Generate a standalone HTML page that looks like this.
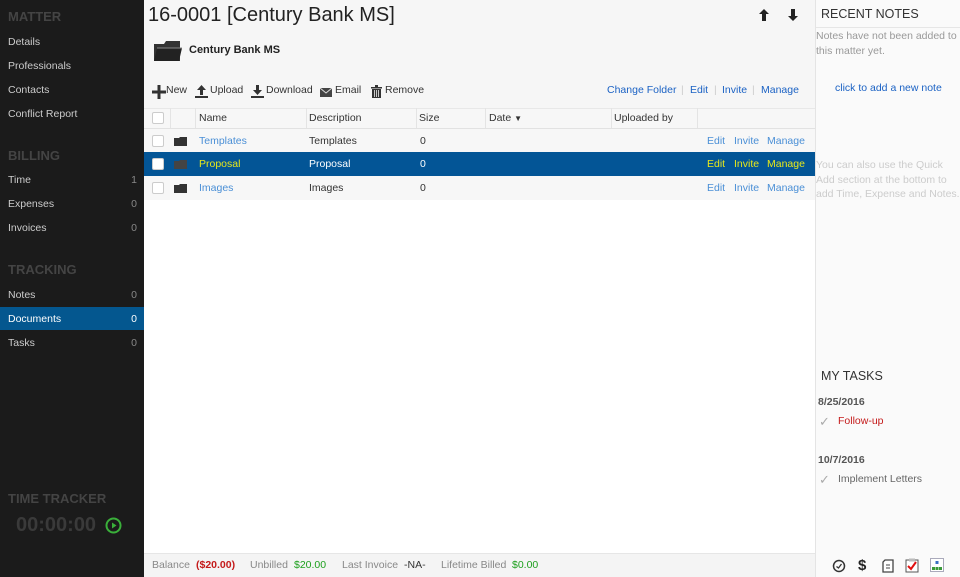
<!DOCTYPE html>
<html><head><meta charset="utf-8"><style>
*{margin:0;padding:0;box-sizing:border-box}
body{width:960px;height:577px;overflow:hidden;font-family:"Liberation Sans",sans-serif;font-size:10.5px;position:relative;background:#fff}
.a{position:absolute;white-space:nowrap}
#sb{position:absolute;left:0;top:0;width:144px;height:577px;background:#1b1b1b}
.h{color:#444;font-weight:bold;font-size:13px;left:8px}
.it{left:8px;color:#ccc;font-size:10.5px}
.ct{right:7px;color:#888;font-size:10.5px}
#main{position:absolute;left:144px;top:0;width:671px;height:577px;background:#fff}
#top{position:absolute;left:0;top:0;width:671px;height:108px;background:#f6f6f6}
.lnk{color:#1b62c4}
.row{position:absolute;left:0;width:671px;height:24px;background:#f7f7f7}
.cb{position:absolute;left:8px;top:6px;width:12px;height:12px;border:1px solid #ccc;border-radius:2px;background:#fff}
.c{position:absolute;top:6px;color:#333;white-space:nowrap}
.bl{color:#4a8fd6}
.t{color:#333;top:84px}
.f{top:559px}
#rp{position:absolute;left:815px;top:0;width:145px;height:577px;background:#fafafa;border-left:1px solid #e4e4e4}
</style></head><body>
<div id="sb">
<div class="a h" style="top:9px">MATTER</div>
<div class="a it" style="top:36px">Details</div>
<div class="a it" style="top:60px">Professionals</div>
<div class="a it" style="top:84px">Contacts</div>
<div class="a it" style="top:108px">Conflict Report</div>
<div class="a h" style="top:148px">BILLING</div>
<div class="a it" style="top:174px">Time</div><div class="a ct" style="top:174px">1</div>
<div class="a it" style="top:198px">Expenses</div><div class="a ct" style="top:198px">0</div>
<div class="a it" style="top:222px">Invoices</div><div class="a ct" style="top:222px">0</div>
<div class="a h" style="top:262px">TRACKING</div>
<div class="a it" style="top:289px">Notes</div><div class="a ct" style="top:289px">0</div>
<div class="a" style="left:0;top:307px;width:144px;height:23px;background:#04578f"></div>
<div class="a it" style="top:313px;color:#fff">Documents</div><div class="a ct" style="top:313px;color:#fff">0</div>
<div class="a it" style="top:337px">Tasks</div><div class="a ct" style="top:337px">0</div>
<div class="a h" style="top:491px">TIME TRACKER</div>
<div class="a" style="left:16px;top:514px;color:#3a3a3a;font-size:20px;font-weight:bold">00:00:00</div>
<svg class="a" style="left:105px;top:517px" width="17" height="17"><circle cx="8.5" cy="8.5" r="7" fill="none" stroke="#3ab03a" stroke-width="2"/><path d="M7 5.5L11.5 8.5L7 11.5Z" fill="#3ab03a"/></svg>
</div>
<div id="main">
<div id="top"></div>
<div class="a" style="left:4px;top:4px;font-size:20px;color:#222">16-0001 [Century Bank MS]</div>
<svg class="a" style="left:615px;top:9px" width="10" height="12"><path d="M5 0L10 5H7v7H3V5H0z" fill="#222"/></svg>
<svg class="a" style="left:644px;top:9px" width="10" height="12"><path d="M5 12L10 7H7V0H3v7H0z" fill="#222"/></svg>
<svg class="a" style="left:10px;top:40px" width="28" height="22"><path d="M0 4h10l2-3h14v20H0z" fill="#333"/><path d="M3 8h25l-3 13H0z" fill="#222"/><path d="M3 8h25" stroke="#888" stroke-width="1"/></svg>
<div class="a" style="left:45px;top:44px;font-weight:bold;color:#222;font-size:11px">Century Bank MS</div>
<svg class="a" style="left:8px;top:85px" width="14" height="14"><path d="M5.5 0h3v5.5H14v3H8.5V14h-3V8.5H0v-3h5.5z" fill="#333"/></svg>
<div class="a t" style="left:22px">New</div>
<svg class="a" style="left:51px;top:85px" width="13" height="13"><path d="M6.5 0L11 5H8v5H5V5H2z M0 11h13v2H0z" fill="#333"/></svg>
<div class="a t" style="left:66px">Upload</div>
<svg class="a" style="left:107px;top:85px" width="13" height="13"><path d="M6.5 10L11 5H8V0H5v5H2z M0 11h13v2H0z" fill="#333"/></svg>
<div class="a t" style="left:122px">Download</div>
<svg class="a" style="left:176px;top:88px" width="12" height="9"><rect width="12" height="9" fill="#444"/><path d="M0 0l6 5l6-5" stroke="#ddd" fill="none"/></svg>
<div class="a t" style="left:191px">Email</div>
<svg class="a" style="left:227px;top:85px" width="11" height="13"><path d="M0 2h11v1.5H0zM4 0h3v2H4zM1 4h9v9H1z" fill="#333"/><path d="M3.5 5v7M5.5 5v7M7.5 5v7" stroke="#eee" stroke-width=".8"/></svg>
<div class="a t" style="left:241px">Remove</div>
<div class="a lnk" style="left:463px;top:84px">Change Folder</div>
<div class="a" style="left:537px;top:84px;color:#ccc">|</div>
<div class="a lnk" style="left:546px;top:84px">Edit</div>
<div class="a" style="left:570px;top:84px;color:#ccc">|</div>
<div class="a lnk" style="left:578px;top:84px">Invite</div>
<div class="a" style="left:608px;top:84px;color:#ccc">|</div>
<div class="a lnk" style="left:617px;top:84px">Manage</div>
<div class="row" style="top:108px;height:21px;background:#f7f7f7;border-top:1px solid #e8e8e8;border-bottom:1px solid #e2e2e2"></div>
<div class="cb" style="top:112px"></div>
<div class="a" style="left:26px;top:108px;height:20px;border-left:1px solid #e4e4e4"></div>
<div class="a" style="left:51px;top:108px;height:20px;border-left:1px solid #e4e4e4"></div>
<div class="a" style="left:162px;top:108px;height:20px;border-left:1px solid #e4e4e4"></div>
<div class="a" style="left:272px;top:108px;height:20px;border-left:1px solid #e4e4e4"></div>
<div class="a" style="left:341px;top:108px;height:20px;border-left:1px solid #e4e4e4"></div>
<div class="a" style="left:467px;top:108px;height:20px;border-left:1px solid #e4e4e4"></div>
<div class="a" style="left:553px;top:108px;height:20px;border-left:1px solid #e4e4e4"></div>
<div class="c" style="left:55px;top:112px">Name</div>
<div class="c" style="left:165px;top:112px">Description</div>
<div class="c" style="left:275px;top:112px">Size</div>
<div class="c" style="left:345px;top:112px">Date <span style="font-size:8px">▼</span></div>
<div class="c" style="left:470px;top:112px">Uploaded by</div>

<div class="row" style="top:129px;height:23px"><div class="cb"></div><svg class="a" style="left:30px;top:8px" width="13" height="9"><path d="M0 1h5l1-1h7v9H0z" fill="#333"/></svg><div class="c bl" style="left:55px">Templates</div><div class="c" style="left:165px">Templates</div><div class="c" style="left:276px">0</div><div class="c bl" style="left:563px">Edit</div><div class="c bl" style="left:590px">Invite</div><div class="c bl" style="left:623px">Manage</div></div>
<div class="row" style="top:152px;height:24px;background:#035596"><div class="cb"></div><svg class="a" style="left:30px;top:8px" width="13" height="9"><path d="M0 1h5l1-1h7v9H0z" fill="#444"/></svg><div class="c" style="left:55px;color:#e8e81a">Proposal</div><div class="c" style="left:165px;color:#fff">Proposal</div><div class="c" style="left:276px;color:#fff">0</div><div class="c" style="left:563px;color:#e8e81a">Edit</div><div class="c" style="left:590px;color:#e8e81a">Invite</div><div class="c" style="left:623px;color:#e8e81a">Manage</div></div>
<div class="row" style="top:176px;height:24px"><div class="cb"></div><svg class="a" style="left:30px;top:8px" width="13" height="9"><path d="M0 1h5l1-1h7v9H0z" fill="#333"/></svg><div class="c bl" style="left:55px">Images</div><div class="c" style="left:165px">Images</div><div class="c" style="left:276px">0</div><div class="c bl" style="left:563px">Edit</div><div class="c bl" style="left:590px">Invite</div><div class="c bl" style="left:623px">Manage</div></div>

<div class="a" style="left:0;top:553px;width:671px;height:24px;background:#f4f4f4;border-top:1px solid #e6e6e6"></div>
<div class="a f" style="left:8px;color:#888">Balance</div>
<div class="a f" style="left:52px;color:#c41a1a;font-weight:bold">($20.00)</div>
<div class="a f" style="left:106px;color:#888">Unbilled</div>
<div class="a f" style="left:150px;color:#1ea01e">$20.00</div>
<div class="a f" style="left:198px;color:#888">Last Invoice</div>
<div class="a f" style="left:260px;color:#333">-NA-</div>
<div class="a f" style="left:297px;color:#888">Lifetime Billed</div>
<div class="a f" style="left:368px;color:#1ea01e">$0.00</div>
</div>
<div id="rp">
<div class="a" style="left:5px;top:7px;font-size:12.5px;color:#333">RECENT NOTES</div>
<div class="a" style="left:0;top:27px;width:145px;border-top:1px solid #e6e6e6"></div>
<div class="a" style="left:0;top:29px;color:#999;line-height:14.5px">Notes have not been added to<br>this matter yet.</div>
<div class="a lnk" style="left:19px;top:82px">click to add a new note</div>
<div class="a" style="left:0;top:158px;color:#ccc;line-height:14.5px">You can also use the Quick<br>Add section at the bottom to<br>add Time, Expense and Notes.</div>
<div class="a" style="left:5px;top:369px;font-size:12.5px;color:#333">MY TASKS</div>
<div class="a" style="left:2px;top:396px;font-weight:bold;color:#555">8/25/2016</div>
<div class="a" style="left:3px;top:414px;color:#aaa;font-size:13px">✓</div>
<div class="a" style="left:22px;top:415px;color:#c41a1a">Follow-up</div>
<div class="a" style="left:2px;top:454px;font-weight:bold;color:#555">10/7/2016</div>
<div class="a" style="left:3px;top:472px;color:#aaa;font-size:13px">✓</div>
<div class="a" style="left:22px;top:473px;color:#666">Implement Letters</div>
<svg class="a" style="left:16px;top:559px" width="14" height="14"><circle cx="7" cy="7" r="5.5" fill="none" stroke="#333" stroke-width="1.5"/><path d="M4.5 7.5L6.5 9L9.5 5" fill="none" stroke="#333" stroke-width="1.3"/></svg>
<div class="a" style="left:42px;top:557px;font-size:15px;font-weight:bold;color:#222">$</div>
<svg class="a" style="left:66px;top:559px" width="12" height="14"><path d="M3 1h8v12H1V3z" fill="#fff" stroke="#444" stroke-width="1.3"/><path d="M4 6h4M4 9h4" stroke="#444"/></svg>
<svg class="a" style="left:89px;top:558px" width="14" height="15"><rect x="1" y="2" width="12" height="12" fill="#fff" stroke="#555"/><rect x="4" y="0.5" width="6" height="3" fill="#bbb"/><path d="M3 8l3 3l5-7" fill="none" stroke="#e01010" stroke-width="2"/></svg>
<svg class="a" style="left:114px;top:558px" width="14" height="15"><rect x="0.5" y="0.5" width="13" height="13" fill="#fff" stroke="#aab"/><rect x="5.5" y="3" width="3" height="3" fill="#3a6fc4"/><path d="M2 9h3v3H2zM5.5 9h3v3h-3zM9 9h3v3H9z" fill="#3a9a3a"/></svg>
</div>
</body></html>
